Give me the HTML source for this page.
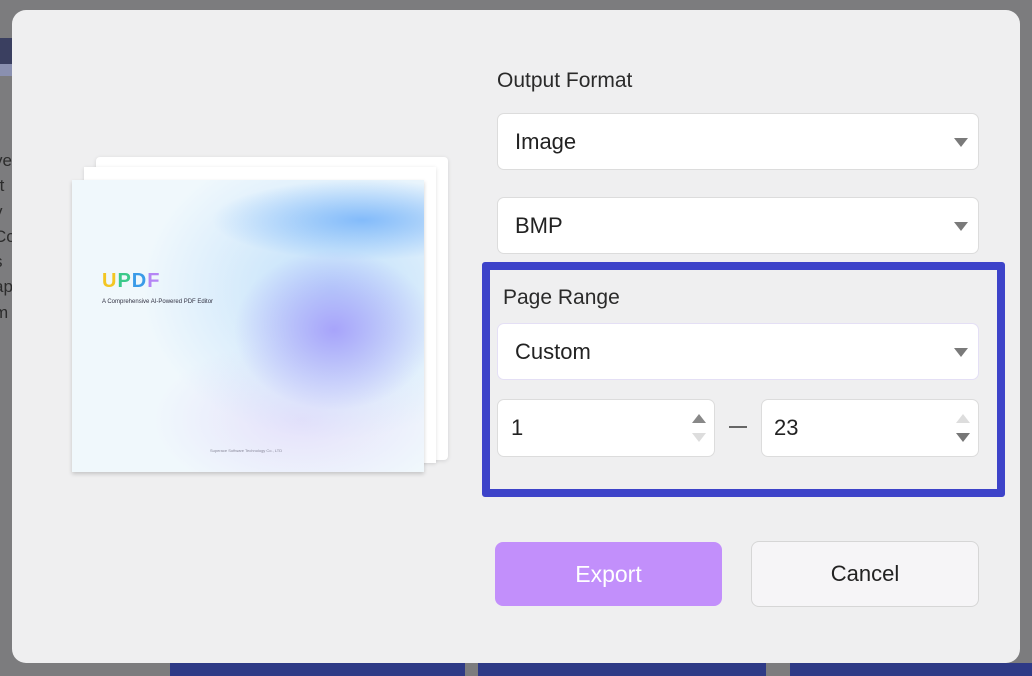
<!DOCTYPE html>
<html><head><style>
*{box-sizing:border-box;margin:0;padding:0}
body{width:1032px;height:676px;overflow:hidden;background:#7c7c7e;font-family:"Liberation Sans",sans-serif;position:relative}
.bg{position:absolute;color:#333}
.dlg{position:absolute;left:12px;top:10px;width:1008px;height:653px;background:#efeff0;border-radius:14px}
.lbl{position:absolute;font-size:21px;color:#2a2a2a}
.box{position:absolute;background:#fff;border:1px solid #dcdcdc;border-radius:7px;font-size:22px;color:#222;padding-left:17px;display:flex;align-items:center}
.tri{position:absolute;right:10px;top:50%;margin-top:-4px;width:0;height:0;border-left:7px solid transparent;border-right:7px solid transparent;border-top:9px solid #7a7a7a}
.up{position:absolute;right:8px;width:0;height:0;border-left:7px solid transparent;border-right:7px solid transparent}
</style></head><body>
<div class="bg" style="left:0;top:38px;width:12px;height:26px;background:#3a3f60"></div>
<div class="bg" style="left:0;top:64px;width:12px;height:12px;background:#8a90b0"></div>
<div class="bg" style="left:-6px;top:148px;font-size:17px;line-height:25.3px;color:#2c2c2c">ve<br>rt<br>v<br>Co<br>s<br>ap<br>m<br>,</div>
<div style="position:absolute;left:170px;top:663px;width:295px;height:13px;background:#2e3a86"></div>
<div style="position:absolute;left:478px;top:663px;width:288px;height:13px;background:#2e3a86"></div>
<div style="position:absolute;left:790px;top:663px;width:242px;height:13px;background:#2e3a86"></div>
<div class="dlg"></div>
<div style="position:absolute;left:96px;top:157px;width:352px;height:303px;background:#fff;border-radius:4px;box-shadow:0 1px 4px rgba(0,0,0,.12)"></div>
<div style="position:absolute;left:84px;top:167px;width:352px;height:296px;background:#fff;box-shadow:0 1px 4px rgba(0,0,0,.12)"></div>
<div style="position:absolute;left:72px;top:180px;width:352px;height:292px;overflow:hidden;box-shadow:0 2px 4px rgba(0,0,0,.18);background:
radial-gradient(ellipse 100px 80px at 262px 150px,rgba(165,160,250,.95),rgba(165,160,250,0)),
radial-gradient(ellipse 150px 40px at 290px 40px,rgba(110,175,250,.8),rgba(110,175,250,0)),
radial-gradient(ellipse 190px 150px at 260px 110px,rgba(175,215,250,.75),rgba(175,215,250,0)),
radial-gradient(ellipse 150px 80px at 230px 240px,rgba(225,215,250,.7),rgba(225,215,250,0)),
#f0f8fc">
<div style="position:absolute;left:30px;top:90px;font-size:20px;font-weight:bold;letter-spacing:1px"><span style="color:#f3c623">U</span><span style="color:#3bc98a">P</span><span style="color:#3a9be8">D</span><span style="color:#b585f5">F</span></div>
<div style="position:absolute;left:30px;top:119px;font-size:6px;color:#334">A Comprehensive AI-Powered PDF Editor</div>
<div style="position:absolute;left:138px;top:268px;font-size:4px;color:#889">Superace Software Technology Co., LTD</div>
</div>
<div class="lbl" style="left:497px;top:69px">Output Format</div>
<div class="box" style="left:497px;top:113px;width:482px;height:57px">Image<span class="tri"></span></div>
<div class="box" style="left:497px;top:197px;width:482px;height:57px">BMP<span class="tri"></span></div>
<div style="position:absolute;left:482px;top:262px;width:523px;height:235px;border:8px solid #3d43c9;border-radius:3px"></div>
<div class="lbl" style="left:503px;top:286px">Page Range</div>
<div class="box" style="left:497px;top:323px;width:482px;height:57px;border-color:#e4dff5">Custom<span class="tri"></span></div>
<div class="box" style="left:497px;top:399px;width:218px;height:58px;padding-left:13px">1<span class="up" style="top:14px;border-bottom:9px solid #888"></span><span class="up" style="top:33px;border-top:9px solid #ddd"></span></div>
<div style="position:absolute;left:729px;top:426px;width:18px;height:2px;background:#666"></div>
<div class="box" style="left:761px;top:399px;width:218px;height:58px;padding-left:12px">23<span class="up" style="top:14px;border-bottom:9px solid #ddd"></span><span class="up" style="top:33px;border-top:9px solid #777"></span></div>
<div style="position:absolute;left:495px;top:542px;width:227px;height:64px;background:#c28ffb;border-radius:8px;color:#fff;font-size:23px;display:flex;align-items:center;justify-content:center">Export</div>
<div style="position:absolute;left:751px;top:541px;width:228px;height:66px;background:#f6f5f7;border:1px solid #d6d6d6;border-radius:8px;color:#222;font-size:22px;display:flex;align-items:center;justify-content:center">Cancel</div>
</body></html>
